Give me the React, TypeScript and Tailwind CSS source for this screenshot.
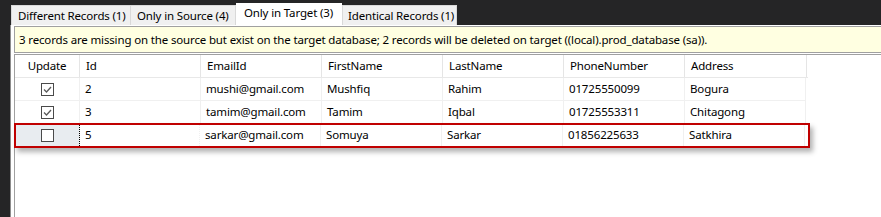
import React from "react";

const cols = [
  { name: "Update", w: "w-[65px]" },
  { name: "Id", w: "w-[121px]" },
  { name: "EmailId", w: "w-[121px]" },
  { name: "FirstName", w: "w-[121px]" },
  { name: "LastName", w: "w-[121px]" },
  { name: "PhoneNumber", w: "w-[121px]" },
  { name: "Address", w: "w-[122px]" },
];

const rows = [
  { checked: true, cells: ["2", "mushi@gmail.com", "Mushfiq", "Rahim", "01725550099", "Bogura"] },
  { checked: true, cells: ["3", "tamim@gmail.com", "Tamim", "Iqbal", "01725553311", "Chitagong"] },
  { checked: false, cells: ["5", "sarkar@gmail.com", "Somuya", "Sarkar", "01856225633", "Satkhira"] },
];

function Checkbox({ checked }: { checked: boolean }) {
  return (
    <div className="w-[13px] h-[13px] border border-[#4a4a4a] bg-white flex items-center justify-center">
      {checked && (
        <svg width="11" height="11" viewBox="0 0 11 11">
          <polyline points="2,5.5 4.5,8 9,3" fill="none" stroke="#5a5a5a" strokeWidth="1.3" />
        </svg>
      )}
    </div>
  );
}

export default function App() {
  const widths = ["w-[65px]", "w-[121px]", "w-[121px]", "w-[121px]", "w-[121px]", "w-[121px]", "w-[121px]"];
  return (
    <div className="w-[881px] h-[217px] bg-[#252526] flex flex-col overflow-hidden font-['Segoe_UI','Noto_Sans',sans-serif] text-[11.5px] tracking-[-0.15px] text-black">
      <div className="h-[25px] shrink-0 flex items-end pl-[11px]">
        <div className="w-[120px] h-[20px] bg-[#f0f0f0] border border-b-0 border-[#d9d9d9] pl-[6px] flex items-center whitespace-nowrap">Different Records (1)</div>
        <div className="w-[105px] h-[20px] bg-[#f0f0f0] border border-l-0 border-b-0 border-[#d9d9d9] pl-[6px] flex items-center whitespace-nowrap">Only in Source (4)</div>
        <div className="w-[106px] h-[22px] bg-white pl-[8px] pb-[2px] flex items-center whitespace-nowrap">Only in Target (3)</div>
        <div className="w-[115px] h-[20px] bg-[#f0f0f0] border border-b-0 border-[#d9d9d9] pl-[5px] flex items-center whitespace-nowrap">Identical Records (1)</div>
      </div>
      <div className="flex-1 ml-[10px] border-l border-[#8c8c8c] bg-white pl-[3px] pt-[1px] flex flex-col relative">
        <div className="h-[27px] shrink-0 border border-r-0 border-[#a0a0a0] bg-[#ffffe1] pl-[4px] pt-[1px] flex items-center whitespace-nowrap">
          3 records are missing on the source but exist on the target database; 2 records will be deleted on target ((local).prod_database (sa)).
        </div>
        <div className="flex-1 mt-[1px] border-l border-t border-[#a0a0a0]">
          <div className="flex h-[23px] border-b border-[#e8e8e8] w-[793px]">
            {cols.map((c, i) => (
              <div
                key={c.name}
                className={`${c.w} h-full border-r border-[#e5e5e5] flex items-center ${i === 0 ? "justify-center" : "pl-[6px]"}`}
              >
                {c.name}
              </div>
            ))}
          </div>
          {rows.map((r, ri) => (
            <div key={ri} className="flex h-[23px] border-b border-[#f0f0f0] w-[791px]">
              <div className={`w-[65px] h-full border-r border-[#f0f0f0] flex items-center justify-center ${ri === 2 ? "bg-[#e8ecf0]" : ""}`}>
                <Checkbox checked={r.checked} />
              </div>
              {r.cells.map((c, ci) => (
                <div
                  key={ci}
                  className={`${widths[ci + 1]} h-full border-r border-[#f0f0f0] flex items-center pl-[5px] ${ri === 2 && ci === 0 ? "border-l border-l-black border-dotted -ml-[1px]" : ""}`}
                >
                  {c}
                </div>
              ))}
            </div>
          ))}
        </div>
        <div className="absolute left-[3px] top-[98px] w-[796px] h-[25px] border-2 border-[#c00000] shadow-[3px_4px_5px_rgba(0,0,0,0.3)] pointer-events-none" />
      </div>
    </div>
  );
}
